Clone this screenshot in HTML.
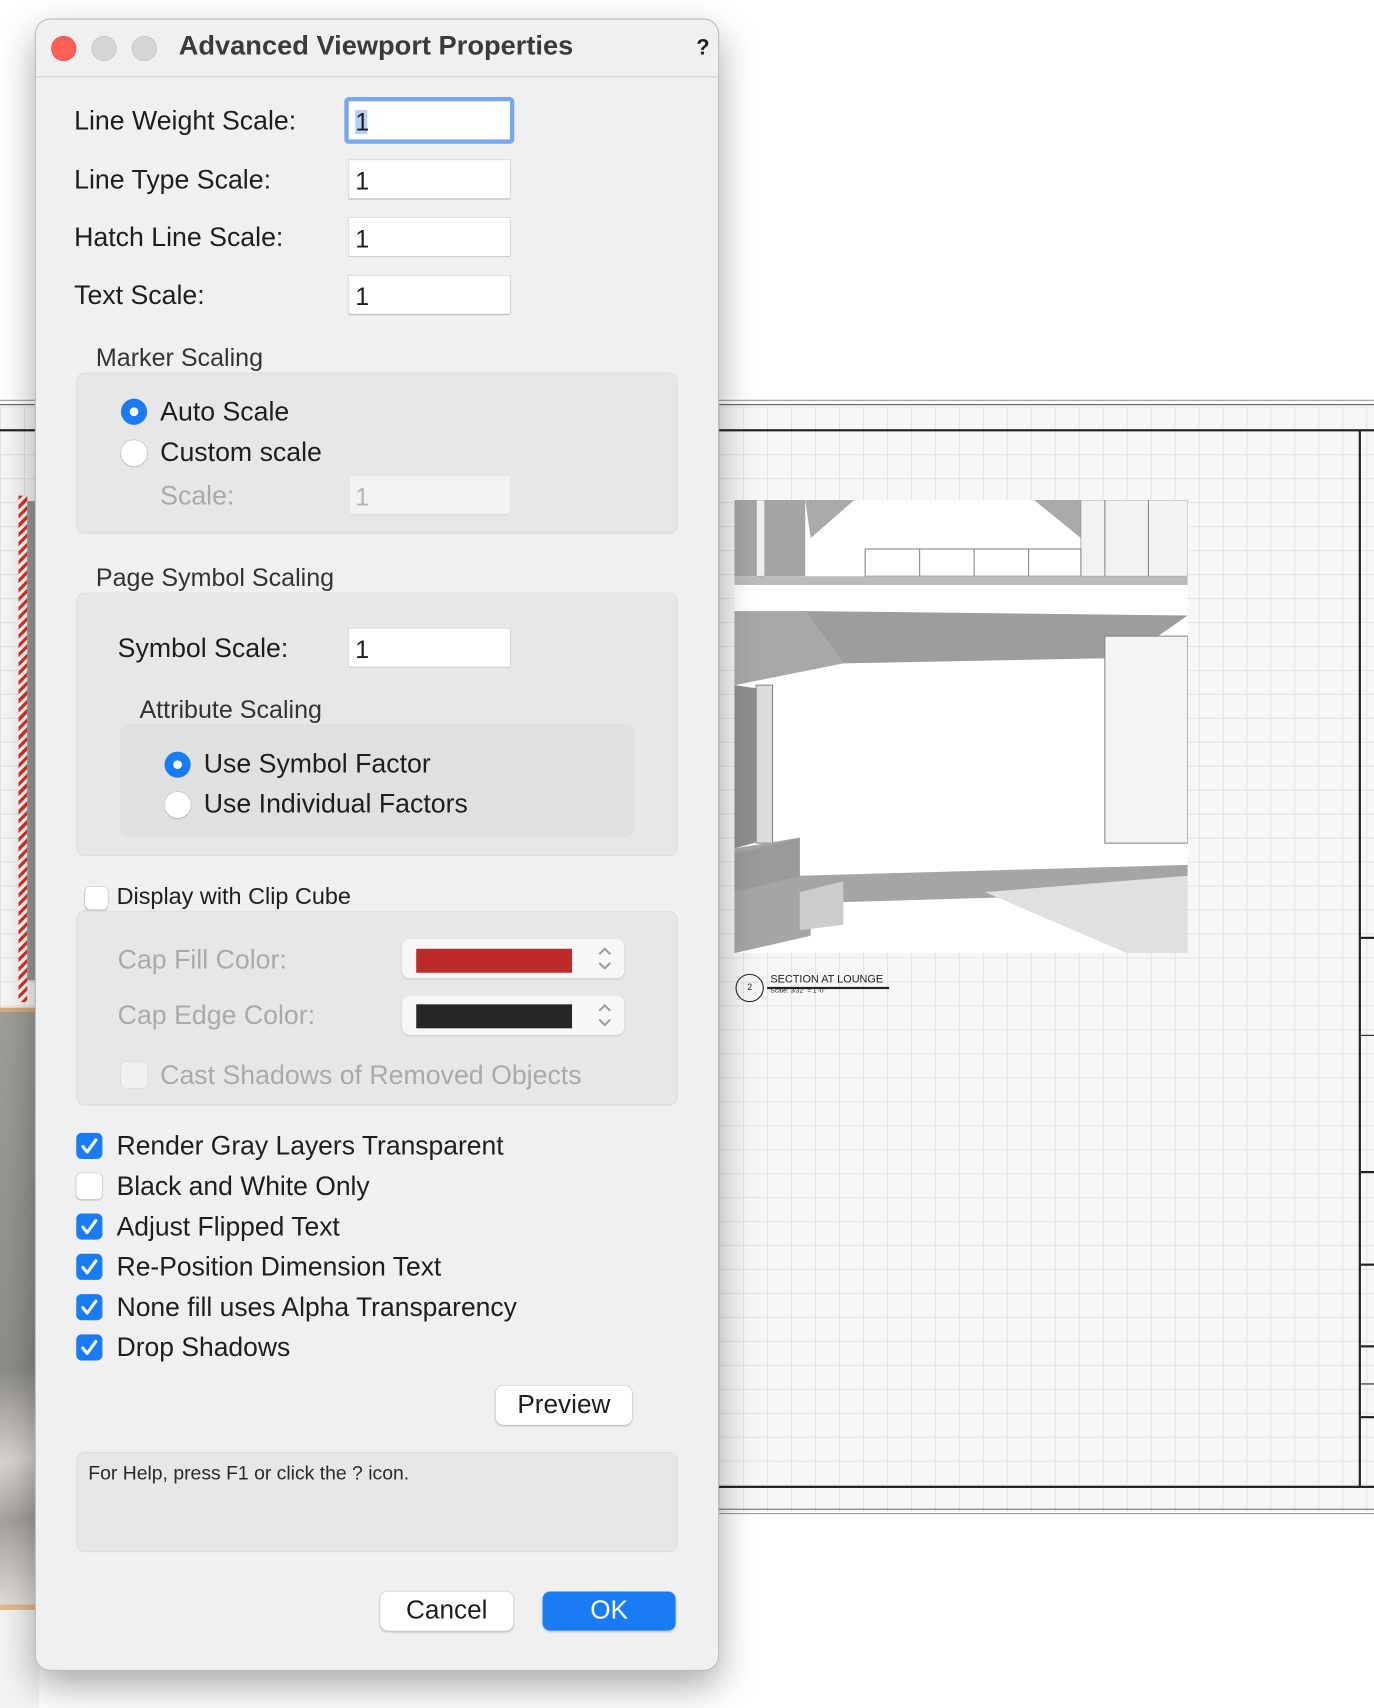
<!DOCTYPE html>
<html><head><meta charset="utf-8"><style>
html,body{margin:0;padding:0;width:1374px;height:1708px;overflow:hidden;background:#fff;}
#w{position:absolute;left:0;top:0;width:1261px;height:1568px;transform:scale(1.08961,1.08929);transform-origin:0 0;font-family:"Liberation Sans",sans-serif;color:#1e1e1e;}
.a{position:absolute;}
.grid{background-color:#f7f7f7;background-image:linear-gradient(#e3e3e3 1px,transparent 1px),linear-gradient(90deg,#e3e3e3 1px,transparent 1px);background-size:22px 22px;}
.t{position:absolute;white-space:nowrap;line-height:1;}
.fld{position:absolute;background:#fff;box-shadow:0 0 0 0.5px #c8c8c8,0 1px 1px rgba(0,0,0,.25);}
.grp{position:absolute;background:#e6e7e6;border:1px solid #dcdddc;border-radius:8px;}
.rad{position:absolute;width:24px;height:24px;border-radius:50%;background:#fff;box-shadow:0 0 0 0.5px #bbb,0 1px 1px rgba(0,0,0,.2);}
.rad.on{background:#1a7cf5;box-shadow:none;}
.rad.on:after{content:"";position:absolute;left:8px;top:8px;width:8px;height:8px;border-radius:50%;background:#fff;}
.cb{position:absolute;width:24px;height:24px;border-radius:5px;background:#fff;box-shadow:0 0 0 0.5px #bbb,0 1px 1px rgba(0,0,0,.2);}
.cb.on{background:#1a7cf5;box-shadow:none;}
.btn{position:absolute;background:#fff;border-radius:7px;box-shadow:0 0 0 0.5px #ccc,0 1px 2px rgba(0,0,0,.25);font-size:24px;text-align:center;}
.L{font-size:24.5px;}
.C{font-size:24.3px;}
</style></head><body><div id="w">
<div class="a" style="left:0;top:367px;width:1261px;height:1px;background:#999"></div>
<div class="a" style="left:0;top:371px;width:1261px;height:1px;background:#555"></div>
<div class="a grid" style="left:0;top:373px;width:1261px;height:1015px"></div>
<div class="a" style="left:0;top:394px;width:1261px;height:2px;background:#222"></div>
<div class="a" style="left:1247px;top:395px;width:2px;height:971px;background:#222"></div>
<div class="a" style="left:0;top:1364px;width:1261px;height:2px;background:#222"></div>
<div class="a" style="left:0;top:1385px;width:1261px;height:1px;background:#777"></div>
<div class="a" style="left:0;top:1389px;width:1261px;height:1px;background:#999"></div>
<div class="a" style="left:1249px;top:860px;width:12px;height:2px;background:#222"></div>
<div class="a" style="left:1249px;top:950px;width:12px;height:1px;background:#222"></div>
<div class="a" style="left:1249px;top:1075px;width:12px;height:2px;background:#222"></div>
<div class="a" style="left:1249px;top:1160px;width:12px;height:2px;background:#222"></div>
<div class="a" style="left:1249px;top:1235px;width:12px;height:2px;background:#222"></div>
<div class="a" style="left:1249px;top:1270px;width:12px;height:1px;background:#222"></div>
<div class="a" style="left:1249px;top:1300px;width:12px;height:2px;background:#222"></div>
<div class="a" style="left:17px;top:455px;width:8px;height:465px;background:repeating-linear-gradient(135deg,#e0321e 0 3px,#fff 3px 6px)"></div>
<div class="a" style="left:25px;top:460px;width:10px;height:440px;background:#999"></div>
<div class="a" style="left:0;top:925px;width:36px;height:4px;background:#d9a877"></div>
<div class="a" style="left:0;top:929px;width:36px;height:546px;background:linear-gradient(170deg,#a09e9a,#8f8d89 60%,#d8d5d0 75%,#a5a29d 85%,#e5e2de)"></div>
<div class="a" style="left:0;top:1473px;width:36px;height:5px;background:#e6b88a"></div>
<div class="a" style="left:0;top:1478px;width:36px;height:90px;background:#f3f3f3"></div>
<svg class="a" style="left:674px;top:459px" width="416" height="416" viewBox="0 0 416 416">
<rect width="416" height="416" fill="#fff"/>
<rect x="0" y="0" width="65" height="70" fill="#a5a5a5"/>
<rect x="20" y="0" width="8" height="70" fill="#eee" stroke="#888" stroke-width="0.6"/>
<polygon points="65,0 110,0 70,35" fill="#aaa"/>
<polygon points="275,0 325,0 318,35" fill="#aaa"/>
<rect x="318" y="0" width="98" height="70" fill="#f2f2f2" stroke="#999" stroke-width="0.7"/>
<line x1="340" y1="0" x2="340" y2="70" stroke="#888"/><line x1="380" y1="0" x2="380" y2="70" stroke="#888"/>
<rect x="120" y="45" width="198" height="25" fill="#fff" stroke="#888"/>
<line x1="170" y1="45" x2="170" y2="70" stroke="#888"/><line x1="220" y1="45" x2="220" y2="70" stroke="#888"/><line x1="270" y1="45" x2="270" y2="70" stroke="#888"/>
<rect x="0" y="70" width="416" height="8" fill="#bbb"/>
<polygon points="0,102 65,102 100,150 0,170" fill="#a8a8a8"/>
<polygon points="65,102 416,106 360,145 100,150" fill="#9d9d9d"/>
<polygon points="0,170 35,175 35,310 0,320" fill="#8f8f8f"/>
<rect x="20" y="170" width="15" height="145" fill="#ddd" stroke="#888"/>
<rect x="340" y="125" width="76" height="190" fill="#f4f4f4" stroke="#888"/>
<polygon points="0,320 60,310 60,345 416,335 416,360 70,370 70,400 0,416" fill="#a5a5a5"/>
<polygon points="0,325 60,310 60,345 0,360" fill="#9a9a9a"/>
<polygon points="60,360 100,350 100,390 60,395" fill="#ccc"/>
<polygon points="230,360 416,345 416,416 360,416" fill="#e0e0e0"/>
</svg>
<div class="a" style="left:675px;top:894px;width:24px;height:24px;border:1.5px solid #222;border-radius:50%;font-size:8px;text-align:center;line-height:24px">2</div>
<div class="t" style="left:707px;top:895px;font-size:10px">SECTION AT LOUNGE</div>
<div class="a" style="left:704px;top:906px;width:112px;height:1.5px;background:#222"></div>
<div class="t" style="left:707px;top:907px;font-size:6px">Scale: 3/32" = 1'-0"</div>
<div class="a" style="left:33px;top:18px;width:626px;height:1515px;background:#eff0ef;border-radius:13px;box-shadow:0 0 0 1px #bcbcbc,0 14px 34px rgba(0,0,0,.35)"></div>
<div class="a" style="left:33px;top:70px;width:626px;height:1px;background:#d0d0d0"></div>
<div class="a" style="left:47px;top:33px;width:23px;height:23px;border-radius:50%;background:#fe5f57;box-shadow:inset 0 0 0 0.5px #e0443e"></div>
<div class="a" style="left:84px;top:33px;width:23px;height:23px;border-radius:50%;background:#d5d5d5;box-shadow:inset 0 0 0 0.5px #bdbdbd"></div>
<div class="a" style="left:121px;top:33px;width:23px;height:23px;border-radius:50%;background:#d5d5d5;box-shadow:inset 0 0 0 0.5px #bdbdbd"></div>
<div class="t" style="left:164px;top:30px;font-size:25px;font-weight:bold;color:#3b3b3b">Advanced Viewport Properties</div>
<div class="t" style="left:639px;top:34px;font-size:20px;font-weight:bold">?</div>

<div class="t L" style="left:68px;top:100px">Line Weight Scale:</div>
<div class="a" style="left:316px;top:89px;width:156px;height:43px;border-radius:4px;background:#79a6f0"></div>
<div class="fld" style="left:320px;top:93px;width:148px;height:35px;box-shadow:none"></div>
<div class="a" style="left:326px;top:101px;width:11px;height:22px;background:#b3d1fb"></div>
<div class="t" style="left:326px;top:101px;font-size:23px">1</div>
<div class="t L" style="left:68px;top:154px">Line Type Scale:</div>
<div class="fld" style="left:320px;top:147px;width:148px;height:35px"></div>
<div class="t" style="left:326px;top:155px;font-size:23px">1</div>
<div class="t L" style="left:68px;top:207px">Hatch Line Scale:</div>
<div class="fld" style="left:320px;top:200px;width:148px;height:35px"></div>
<div class="t" style="left:326px;top:208px;font-size:23px">1</div>
<div class="t L" style="left:68px;top:260px">Text Scale:</div>
<div class="fld" style="left:320px;top:253px;width:148px;height:35px"></div>
<div class="t" style="left:326px;top:261px;font-size:23px">1</div>

<div class="t" style="left:88px;top:317px;font-size:23px;color:#333">Marker Scaling</div>
<div class="grp" style="left:70px;top:342px;width:550px;height:146px"></div>
<div class="rad on" style="left:111px;top:366px"></div>
<div class="t L" style="left:147px;top:367px">Auto Scale</div>
<div class="rad" style="left:111px;top:404px"></div>
<div class="t L" style="left:147px;top:404px">Custom scale</div>
<div class="t L" style="left:147px;top:444px;color:#aaa">Scale:</div>
<div class="fld" style="left:321px;top:437px;width:147px;height:35px;background:#f2f3f2;box-shadow:0 1px 1px rgba(0,0,0,.12)"></div>
<div class="t" style="left:326px;top:445px;font-size:23px;color:#b5b5b5">1</div>

<div class="t" style="left:88px;top:519px;font-size:23px;color:#333">Page Symbol Scaling</div>
<div class="grp" style="left:70px;top:544px;width:550px;height:240px"></div>
<div class="t L" style="left:108px;top:584px">Symbol Scale:</div>
<div class="fld" style="left:320px;top:577px;width:148px;height:35px"></div>
<div class="t" style="left:326px;top:585px;font-size:23px">1</div>
<div class="t" style="left:128px;top:640px;font-size:23px;color:#333">Attribute Scaling</div>
<div class="grp" style="left:110px;top:665px;width:470px;height:101px;background:#dfe0df"></div>
<div class="rad on" style="left:151px;top:690px"></div>
<div class="t L" style="left:187px;top:690px">Use Symbol Factor</div>
<div class="rad" style="left:151px;top:727px"></div>
<div class="t L" style="left:187px;top:727px">Use Individual Factors</div>

<div class="cb" style="left:78px;top:814px;width:21px;height:21px"></div>
<div class="t" style="left:107px;top:813px;font-size:21.5px">Display with Clip Cube</div>
<div class="grp" style="left:70px;top:836px;width:550px;height:177px"></div>
<div class="t L" style="left:108px;top:870px;color:#aaa">Cap Fill Color:</div>
<div class="a" style="left:369px;top:862px;width:204px;height:36px;background:#f7f7f7;border-radius:7px;box-shadow:0 1px 2px rgba(0,0,0,.12)"></div>
<div class="a" style="left:382px;top:871px;width:143px;height:22px;background:#bd2b29"></div>
<svg class="a" style="left:547px;top:868px" width="16" height="24"><path d="M3 8l5-5 5 5M3 16l5 5 5-5" stroke="#999" stroke-width="1.8" fill="none"/></svg>
<div class="t L" style="left:108px;top:921px;color:#aaa">Cap Edge Color:</div>
<div class="a" style="left:369px;top:914px;width:204px;height:36px;background:#f7f7f7;border-radius:7px;box-shadow:0 1px 2px rgba(0,0,0,.12)"></div>
<div class="a" style="left:382px;top:922px;width:143px;height:22px;background:#262626"></div>
<svg class="a" style="left:547px;top:920px" width="16" height="24"><path d="M3 8l5-5 5 5M3 16l5 5 5-5" stroke="#999" stroke-width="1.8" fill="none"/></svg>
<div class="cb" style="left:111px;top:975px;background:#f0f1f0;box-shadow:0 0 0 0.5px #d5d5d5"></div>
<div class="t L" style="left:147px;top:976px;color:#aaa">Cast Shadows of Removed Objects</div>

<div class="cb on" style="left:70px;top:1040px"><svg width="24" height="24"><path d="M6 12.5l4 5 8-11" stroke="#fff" stroke-width="2.8" fill="none" stroke-linecap="round" stroke-linejoin="round"/></svg></div>
<div class="t C" style="left:107px;top:1041px">Render Gray Layers Transparent</div>
<div class="cb" style="left:70px;top:1077px"></div>
<div class="t C" style="left:107px;top:1078px">Black and White Only</div>
<div class="cb on" style="left:70px;top:1114px"><svg width="24" height="24"><path d="M6 12.5l4 5 8-11" stroke="#fff" stroke-width="2.8" fill="none" stroke-linecap="round" stroke-linejoin="round"/></svg></div>
<div class="t C" style="left:107px;top:1115px">Adjust Flipped Text</div>
<div class="cb on" style="left:70px;top:1151px"><svg width="24" height="24"><path d="M6 12.5l4 5 8-11" stroke="#fff" stroke-width="2.8" fill="none" stroke-linecap="round" stroke-linejoin="round"/></svg></div>
<div class="t C" style="left:107px;top:1152px">Re-Position Dimension Text</div>
<div class="cb on" style="left:70px;top:1188px"><svg width="24" height="24"><path d="M6 12.5l4 5 8-11" stroke="#fff" stroke-width="2.8" fill="none" stroke-linecap="round" stroke-linejoin="round"/></svg></div>
<div class="t C" style="left:107px;top:1189px">None fill uses Alpha Transparency</div>
<div class="cb on" style="left:70px;top:1225px"><svg width="24" height="24"><path d="M6 12.5l4 5 8-11" stroke="#fff" stroke-width="2.8" fill="none" stroke-linecap="round" stroke-linejoin="round"/></svg></div>
<div class="t C" style="left:107px;top:1226px">Drop Shadows</div>

<div class="btn" style="left:455px;top:1272px;width:125px;height:36px;line-height:36px">Preview</div>
<div class="grp" style="left:70px;top:1333px;width:550px;height:90px"></div>
<div class="t" style="left:81px;top:1344px;font-size:17.8px;color:#2a2a2a">For Help, press F1 or click the ? icon.</div>
<div class="btn" style="left:349px;top:1461px;width:122px;height:36px;line-height:36px">Cancel</div>
<div class="btn" style="left:498px;top:1461px;width:122px;height:36px;line-height:36px;background:#1a7cf5;color:#fff;box-shadow:0 1px 2px rgba(0,0,0,.2)">OK</div>
</div></body></html>
